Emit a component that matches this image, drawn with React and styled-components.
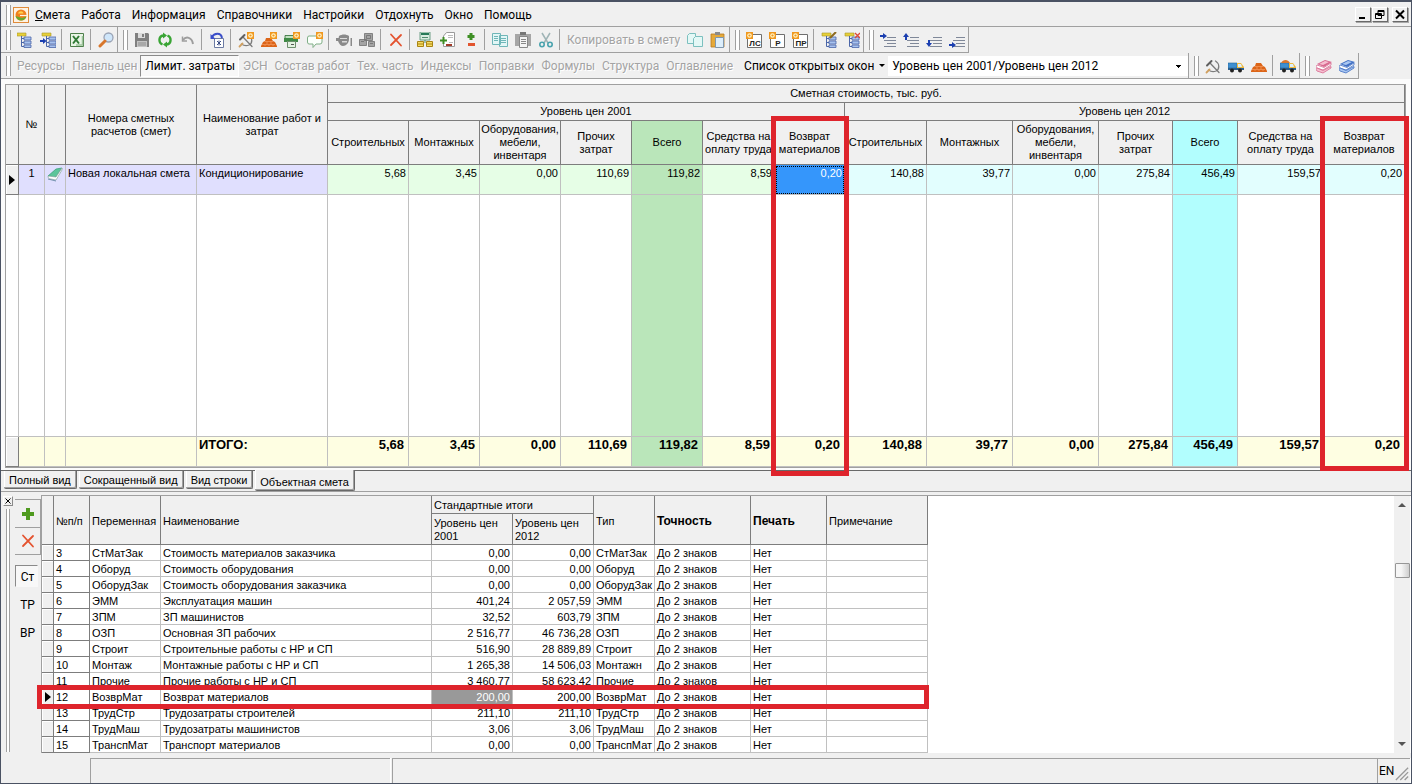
import { Fragment } from "react";
import styled, { createGlobalStyle, css } from "styled-components";

const GlobalStyle = createGlobalStyle`
  :root {
    --face: #f0f0f0;
    --line: #a0a0a0;
    --line-dark: #7d7d7d;
    --line-light: #c0c0c0;
    --mark: #de242c;
    --ui: Roboto, "Open Sans", sans-serif;
    --grid: "Liberation Sans", Arial, sans-serif;
  }

  * {
    box-sizing: border-box;
  }

  body {
    margin: 0;
    background: var(--face);
    color: #000;
    font-family: var(--grid);
    font-size: 11px;
    line-height: 13px;
  }

  button, select {
    margin: 0;
    padding: 0;
    border: 0;
    background: none;
    color: inherit;
    font: inherit;
  }
`;

const Window = styled.div`
  display: flex;
  flex-direction: column;
  min-height: 100vh;
  border: 1px solid #4a5263;
  border-top-width: 2px;
  background: var(--face);
`;

/* ---------- menu and toolbars ---------- */

const MenuBar = styled.header`
  display: flex;
  align-items: center;
  height: 25px;
  padding: 1px 3px 0 5px;
  border-bottom: 1px solid var(--line);
`;

const Grip = styled.span`
  flex: none;
  width: 5px;
  height: 20px;
  margin-right: 2px;
  border: solid var(--line);
  border-width: 0 1px;
  background: #fff;
`;

const Menu = styled.nav`
  display: flex;
  flex: 1;
  padding-left: 1px;
  font-family: var(--ui);
  font-size: 12px;
  line-height: 18px;
`;

const MenuItem = styled.button`
  padding: 0 6px 0 5px;
  white-space: nowrap;
`;

const WindowButtons = styled.div`
  display: flex;
  gap: 1px;
`;

const WindowButton = styled.button`
  width: 16px;
  height: 15px;
  border: 1px solid;
  border-color: #fff #696969 #696969 #fff;
  box-shadow: 1px 1px 0 #a9a9a9;

  &:last-child {
    margin-left: 3px;
  }

  svg {
    display: block;
    width: 14px;
    height: 13px;
  }
`;

const ToolRow = styled.div`
  display: flex;
`;

const Band = styled.div`
  display: flex;
  align-items: center;
  height: 26px;
  padding-left: 5px;
  border: solid var(--line);
  border-width: 0 1px 1px 0;
  font-family: var(--ui);
  font-size: 12px;
  line-height: 18px;
`;

const ToolButton = styled.button`
  display: flex;
  flex: none;
  align-items: center;
  justify-content: center;
  width: 23px;
  height: 22px;

  svg {
    width: 16px;
    height: 16px;
  }
`;

const Separator = styled.span`
  flex: none;
  width: 1px;
  height: 21px;
  margin: 0 3px 0 2px;
  background: var(--line);
`;

const TextButton = styled.button`
  height: 22px;
  padding: 0 3px 0 4px;
  white-space: nowrap;

  &:disabled {
    color: #a3a3a3;
    text-shadow: 1px 1px 0 #fff;
  }

  ${(props) =>
    props.$pressed &&
    css`
      border: 1px solid;
      border-color: #8a8a8a #fff #fff #8a8a8a;
      background: #f8f8f8;
    `}

  ${(props) =>
    props.$drop &&
    css`
      padding-left: 8px;

      &::after {
        content: "";
        display: inline-block;
        margin: 0 0 3px 5px;
        border: 3px solid transparent;
        border-top-color: #000;
        border-bottom: 0;
      }
    `}
`;

const PriceSelect = styled.select`
  width: 300px;
  height: 20px;
  padding-left: 4px;
  appearance: none;
  background-color: #fff;
  background-image: linear-gradient(#000, #000), linear-gradient(#000, #000),
    linear-gradient(#000, #000);
  background-repeat: no-repeat;
  background-position: right 7px top 9px, right 8px top 10px, right 9px top 11px;
  background-size: 5px 1px, 3px 1px, 1px 1px;
`;

/* ---------- upper grid ---------- */

const EstimateArea = styled.main`
  padding: 5px 5px 2px 4px;
  background: #fbfbfb;
`;

const EstimateTable = styled.table`
  width: 100%;
  border: 1px solid var(--line);
  border-spacing: 0;
  table-layout: fixed;
  background: #fff;

  th {
    padding: 0;
    border: solid var(--line-dark);
    border-width: 0 1px 1px 0;
    background: var(--face);
    font-weight: 400;
  }

  td {
    padding: 2px 2px 0;
    border: solid var(--line-light);
    border-width: 0 1px 1px 0;
    vertical-align: top;
    white-space: nowrap;
  }
`;

const HeadRow = styled.tr`
  height: ${(props) => (props.$tall ? 44 : 18)}px;
`;

const HeadCell = styled.th`
  && {
    position: relative;
    background: ${(props) => props.$tone || "var(--face)"};
  }
`;

const EstimateRow = styled.tr`
  height: 30px;
`;

const EmptyRow = styled.tr`
  height: 242px;
`;

const Cell = styled.td`
  && {
    background: ${(props) => props.$tone || "transparent"};
    text-align: ${(props) => props.$align || "left"};
  }

  svg {
    display: block;
    width: 16px;
    height: 16px;
  }
`;

const PickedCell = styled(Cell)`
  && {
    background: #3596fb;
    color: #fff;
    outline: 1px dotted #000;
    outline-offset: -2px;
  }
`;

const MarkerCell = styled.td`
  && {
    padding: 0 0 0 3px;
    border-color: var(--line-dark);
    background: var(--face);
    box-shadow: inset 1px 1px 0 #fff;
    vertical-align: middle;
  }
`;

const RowMarker = styled.span`
  display: block;
  width: 0;
  border: 5px solid transparent;
  border-left: 6px solid #000;
  border-right: 0;
`;

const TotalRow = styled.tr`
  height: 30px;

  && td {
    padding: 1px 4px 0 2px;
    font-size: 13px;
    font-weight: 700;
  }
`;

const ColumnMark = styled.span`
  position: absolute;
  z-index: 2;
  top: -5px;
  left: -4px;
  width: calc(100% + 9px);
  height: ${(props) => props.$height}px;
  border: 5px solid var(--mark);
  pointer-events: none;
`;

/* ---------- view tabs ---------- */

const Tabs = styled.nav`
  display: flex;
  align-items: flex-start;
  gap: 2px;
  height: 22px;
  padding-left: 3px;
  border-top: 1px solid #696969;
  border-bottom: 1px solid var(--line);
`;

const Tab = styled.button`
  height: 18px;
  padding: 1px 5px 0;
  border: 1px solid #696969;
  border-width: 0 1px 1px 0;
  border-radius: 0 0 2px 2px;
  box-shadow: inset -1px -1px 0 var(--line), inset 1px 0 0 #fff;
  white-space: nowrap;

  ${(props) =>
    props.$active &&
    css`
      height: 21px;
      margin-top: -1px;
      padding-top: 4px;
      background: var(--face);
    `}
`;

/* ---------- lower panel ---------- */

const Lower = styled.section`
  display: flex;
  flex: 1;
  margin-top: 3px;
`;

const DockEdge = styled.div`
  display: flex;
  flex-direction: column;
  align-items: center;
  gap: 3px;
  width: 14px;
  padding: 1px 0;
`;

const DockClose = styled.button`
  width: 10px;
  height: 10px;
  border: 1px solid;
  border-color: #fff #8a8a8a #8a8a8a #fff;

  svg {
    display: block;
    width: 8px;
    height: 8px;
  }
`;

const DockGrip = styled.span`
  flex: 1;
  width: 4px;
  border: solid var(--line);
  border-width: 0 1px;
  background: #fff;
`;

const SideTools = styled.div`
  display: flex;
  flex-direction: column;
  width: 26px;
`;

const SideActions = styled.div`
  margin-top: 4px;
  border: solid var(--line);
  border-width: 1px 1px 1px 0;
`;

const SideAction = styled.button`
  display: flex;
  align-items: center;
  justify-content: center;
  width: 100%;
  height: 27px;

  & + & {
    border-top: 1px solid var(--line);
  }

  svg {
    width: 16px;
    height: 16px;
  }
`;

const SideModes = styled.div`
  display: flex;
  flex-direction: column;
  gap: 6px;
  margin: 10px 3px 0 0;
`;

const SideMode = styled.button`
  height: 22px;
  padding: 2px 0 0 2px;
  border: 1px solid ${(props) => (props.$pressed ? "#8a8a8a" : "transparent")};
  border-right-color: transparent;
  border-bottom-color: transparent;
  background: ${(props) => (props.$pressed ? "#f8f8f8" : "none")};
  font-family: var(--ui);
  font-size: 12px;
`;

const VariablesPane = styled.div`
  display: flex;
  flex: 1;
  border: solid var(--line);
  border-width: 1px 0 0 1px;
  background: #fff;
`;

const VariablesTable = styled.table`
  flex: none;
  align-self: flex-start;
  width: 886px;
  border-spacing: 0;
  table-layout: fixed;

  th {
    padding: 2px 2px 0;
    border: solid var(--line-dark);
    border-width: 0 1px 1px 0;
    background: var(--face);
    font-weight: 400;
    text-align: left;
    white-space: nowrap;
  }

  td {
    height: 16px;
    padding: 2px 2px 0;
    border: solid var(--line-light);
    border-width: 0 1px 1px 0;
    white-space: nowrap;
  }
`;

const SplitHead = styled.th`
  && {
    height: ${(props) => props.$height}px;
    padding-top: 1px;
    white-space: normal;
  }
`;

const BoldHead = styled.th`
  && {
    font-size: 12px;
    font-weight: 700;
  }
`;

const VariableRow = styled.tr`
  position: relative;
`;

const Amount = styled.td`
  && {
    text-align: right;
    background: ${(props) => (props.$picked ? "#999" : "none")};
    color: ${(props) => (props.$picked ? "#fff" : "inherit")};
  }
`;

const NumberCell = styled.td`
  && {
    border-color: var(--line-dark);
  }
`;

const RowMark = styled.span`
  position: absolute;
  z-index: 2;
  inset: -4px -1px -4px -5px;
  border: 5px solid var(--mark);
  pointer-events: none;
`;

const ScrollTrack = styled.div`
  display: flex;
  flex-direction: column;
  align-items: center;
  width: 16px;
  margin: 0 1px 0 auto;
  padding: 7px 0;
  background: var(--face);
`;

const ScrollArrow = styled.button`
  width: 0;
  height: 0;
  border: 4px solid transparent;
  border-top: ${(props) => (props.$down ? "4px solid #555" : 0)};
  border-bottom: ${(props) => (props.$down ? 0 : "4px solid #555")};
`;

const ScrollThumb = styled.span`
  width: 15px;
  height: 15px;
  margin: 56px 0 auto;
  border: 1px solid #979797;
  border-radius: 1px;
  background: linear-gradient(90deg, #f6f6f6 40%, #cfcfcf);
`;

/* ---------- status bar ---------- */

const StatusBar = styled.footer`
  display: flex;
  gap: 2px;
  height: 30px;
  padding: 5px 1px 0 89px;
`;

const StatusPane = styled.div`
  flex: ${(props) => props.$flex};
  padding: 6px 1px 0;
  border: solid var(--line);
  border-width: 1px 0 0 1px;
  box-shadow: 1px 0 0 #fff;
  font-size: 12px;
  white-space: nowrap;
`;

const Language = styled(StatusPane)`
  display: flex;
  justify-content: space-between;
  width: 33px;
  margin-left: -2px;
  font-family: var(--ui);

  svg {
    width: 14px;
    height: 16px;
  }
`;

/* ---------- icons ---------- */

const star = (
  <g>
    <rect x="0" y="0" width="7" height="7" fill="#f0981f" />
    <circle cx="3.500" cy="3.500" r="2.300" fill="#fff3c4" />
    <circle cx="3.500" cy="3.500" r="1.100" fill="#f0981f" />
  </g>
);

const badge = <g transform="translate(9 0)">{star}</g>;

const hammer = (
  <g fill="none" strokeLinecap="round">
    <path d="m5 5 9 9.500" stroke="#7a7a7a" strokeWidth="1.300" />
    <path d="m2 7.500 4.500-4.500" stroke="#5f5f5f" strokeWidth="2" />
    <path d="M10.500 3c4 2.500 4.500 8 .5 10-3 1.300-5.500.5-7.500-1" stroke="#7d7d7d" strokeWidth="1.300" />
    <path d="m1.500 14.500 3-3" stroke="#d0a060" strokeWidth="1.800" />
  </g>
);

const bricks = (
  <g>
    <path d="M5 5h5l2 3 2 1 2 4v1H0v-1l2-4 2-1z" fill="#dc6518" />
    <path d="M1 11.500h13M4 8.500h8M6 9v2M10 9v2M8 12v1M4 12v1M12 12v1" stroke="#f3955a" strokeWidth=".8" fill="none" />
  </g>
);

const tree = (
  <g>
    <path d="M0 1h9v3H0z" fill="#e6cf3a" stroke="#a8972a" strokeWidth=".6" />
    <path d="M4.500 4v10.500H7M4.500 6.500H7M4.500 10.500H7" fill="none" stroke="#4b66a8" />
    <path d="M7 5h7v3H7zM7 9h7v3H7zM7 13h7v2.500H7z" fill="#a9c3ee" stroke="#4b66a8" strokeWidth=".8" />
  </g>
);

const sheet = (label) => (
  <g>
    <path d="M1.500 2.500h14v13h-14z" fill="#fff" stroke="#6f6f6f" />
    <text x="9" y="14" textAnchor="middle" fontSize="8" fontWeight="700" fontFamily="Liberation Sans" fill="#222">
      {label}
    </text>
    {star}
  </g>
);

const indent = (shaft, head) => (
  <g fill="none">
    <path d="M7 5.500h9M4 8.500h12M7 11.500h9M4 14.500h12" stroke="#7f8899" />
    <path d={shaft} stroke="#1b3fb0" strokeWidth="2" />
    <path d={head} fill="#1b3fb0" />
  </g>
);

const books = (dark, light) => (
  <g>
    <path d="m1 6 8-4 7 2-8 5z" fill={dark} />
    <path d="m3 6 6-3 4 1-6 3z" fill={light} />
    <path d="M1 7c-1 1-1 2 0 3l6 2 8-5V5L8 9.500z" fill="#fff" stroke={dark} strokeWidth=".8" />
    <path d="M1 10c-1 1-1 2 0 3l6 2 8-5V8.500l-8 4z" fill={light} stroke={dark} strokeWidth=".8" />
  </g>
);

const truck = (
  <g>
    <path d="M0 5h9v5H0z" fill="#3f8fd0" stroke="#22649b" strokeWidth=".6" />
    <path d="M9 5h4l3 4v2H9z" fill="#f0b93e" />
    <path d="M10 6h3l1 3h-4z" fill="#d9efff" />
    <path d="M0 10h16v2H0z" fill="#2c5f8c" />
    <circle cx="4" cy="12.500" r="2" fill="#222" />
    <circle cx="12" cy="12.500" r="2" fill="#222" />
  </g>
);

const cross = (
  <path d="m3 2.500 10 11M13 3 3 13" stroke="#e4532f" strokeWidth="1.800" strokeLinecap="round" fill="none" />
);

const icons = {
  logo: (
    <g>
      <rect x=".5" y=".5" width="15" height="15" fill="#fdf3e4" stroke="#e08b3a" />
      <circle cx="8" cy="8" r="5.500" fill="#f0801e" />
      <path d="M2.500 9c1.500 6 9.500 6 11 .5L9 11z" fill="#6aa92f" />
      <path d="M5 6.500c1-3 5-3 5.500 0z" fill="#ffd34d" />
      <path d="M7 8.500h7" stroke="#fdf3e4" strokeWidth="1.200" />
    </g>
  ),
  tree,
  treeArrow: (
    <g>
      <g transform="translate(2 0)">{tree}</g>
      <path d="M0 9h4" stroke="#1b3fb0" strokeWidth="2" />
      <path d="m3 6 3.500 3L3 12z" fill="#1b3fb0" />
    </g>
  ),
  excel: (
    <g fill="none">
      <path d="M1.500 1.500h13v13h-13z" fill="#e9f5e6" stroke="#4d7f4a" />
      <path d="m4 4 6 7.500M10 4l-6 7.500" stroke="#2f7a34" strokeWidth="2" />
      <path d="M7 13h6.500V4" stroke="#9cc49a" strokeWidth="1.500" />
    </g>
  ),
  search: (
    <g>
      <circle cx="10.500" cy="5.500" r="4.500" fill="#cfe6fa" stroke="#9aa3b5" strokeWidth="1.300" />
      <path d="m7 9-5 5" stroke="#d8762b" strokeWidth="3" strokeLinecap="round" />
    </g>
  ),
  save: (
    <g>
      <path d="M1 1h13l1 1v13H1z" fill="#808080" />
      <path d="M4 1h7v5H4z" fill="#dcdcdc" />
      <path d="M8 2h2v3H8z" fill="#808080" />
      <path d="M3 9h10v6H3z" fill="#c4c4c4" />
      <path d="M4 11h8M4 13h8" stroke="#8d8d8d" />
    </g>
  ),
  refresh: (
    <g fill="none" stroke="#3aa535" strokeWidth="2.400">
      <path d="M5.500 12.500C1 10.500 1.500 3.500 7 3.500" />
      <path d="M10.500 3.500C15 5.500 14.500 12.500 9 12.500" />
      <path d="M6 .5v6L10 3.500zM10 9.500v6L6 12.500z" fill="#3aa535" stroke="none" />
    </g>
  ),
  undo: (
    <g fill="none" stroke="#9d9d9d">
      <path d="M3 8c3-4 9-3 10 4" strokeWidth="2" />
      <path d="M2.500 4.500V9H7" strokeWidth="1.500" />
    </g>
  ),
  undoSheet: (
    <g fill="none">
      <path d="M5.500 6.500h9v9h-9z" fill="#fff" stroke="#6c7ba3" />
      <path d="m8 9 4 4M12 9l-4 4M10 8.500v5" stroke="#3c4e86" />
      <path d="M3 5c2-4 9-5 10 1" stroke="#3b4fc9" strokeWidth="2" />
      <path d="M1.500 2v5h5z" fill="#3b4fc9" />
    </g>
  ),
  hammer,
  hammerNew: (
    <g>
      {hammer}
      {badge}
    </g>
  ),
  bricks,
  bricksNew: (
    <g>
      <g transform="translate(0 1)">{bricks}</g>
      {badge}
    </g>
  ),
  machineNew: (
    <g>
      <path d="M1 3.500h11v3H1z" fill="#bfe0bf" stroke="#2d6a33" strokeWidth=".8" />
      <path d="M0 6h14v4H0z" fill="#3f8a45" />
      <path d="M3.500 9.500h8v6h-8z" fill="#e4f3e2" stroke="#6d8f6c" />
      <path d="M7 12.500h3" stroke="#555" />
      {badge}
    </g>
  ),
  commentNew: (
    <g>
      <path d="M2 4h11q2 0 2 2v4q0 2-2 2H9l-3 3.500V12H2Q.5 12 .5 10V6q0-2 1.500-2z" fill="#fbfffb" stroke="#7fae86" />
      {badge}
    </g>
  ),
  engine: (
    <g fill="#8a8a8a">
      <path d="M3 4c3-2 7-2 10 0v3c0 4-3 7-6 7-2 0-4-2-5-5z" />
      <path d="M0 6h3v3H0zM14.500 6H16v8h-1.500z" />
      <path d="M4 6h7v1H4zM6 9h5v1.500H6z" fill="#dadada" />
    </g>
  ),
  stock: (
    <g fill="#a4a4a4" stroke="#707070" strokeWidth=".8">
      <path d="M5.500 1.500h8v7h-8zM.5 7.500h7v6h-7zM9.500 9.500h6v5h-6z" />
      <path d="M2 9.500h3M7.500 3.500h4v3h-4zM11 11.500h3" />
    </g>
  ),
  cross,
  calc: (
    <g>
      <path d="M3 0h10v8H3z" fill="#d8ece0" stroke="#4f8a6d" strokeWidth=".8" />
      <path d="M4 1h8v2H4z" fill="#277a58" />
      <path d="M5 5.500h6M8 8v3" stroke="#4f8a6d" />
      <path d="M.5 9.500h6v5h-6zM9.500 9.500h6v5h-6z" fill="#f6dc62" stroke="#a98414" />
      <path d="M.5 12h6M9.500 12h6" stroke="#a98414" />
    </g>
  ),
  sheetPlus: (
    <g fill="none">
      <path d="M6.500.5h8v14h-11V4z" fill="#fff" stroke="#9a9a9a" />
      <path d="M8 3.500h5M8 5.500h5M9 10.500h4" stroke="#bbb" />
      <path d="M0 8.500h7M3.500 5v7" stroke="#3f8f25" strokeWidth="2" />
      <path d="M6 13h6" stroke="#a23b2a" strokeWidth="2" />
    </g>
  ),
  plusMinus: (
    <g fill="none" strokeWidth="3">
      <path d="M4.500 4.500h7M8 1v7" stroke="#3f8f25" />
      <path d="M5 12.500h7" stroke="#e2552f" />
    </g>
  ),
  copySheets: (
    <g fill="#e2f6f6" stroke="#6fb6b8">
      <path d="M.5 1.500h8v11h-8zM7.500 3.500h8v11h-8z" />
      <path d="M2 4.500h4M2 6.500h4M2 8.500h4M9 6.500h5M9 8.500h5M9 10.500h5" />
    </g>
  ),
  pasteGray: (
    <g>
      <path d="M0 2h16v12H0z" fill="#a6a6a6" />
      <path d="M5 0h6v3H5z" fill="#777" />
      <path d="M4.500 4.500h8v11h-8z" fill="#f4f4f4" stroke="#888" />
      <path d="M6 7.500h5M6 9.500h5M6 11.500h5" stroke="#888" />
    </g>
  ),
  cut: (
    <g fill="none">
      <path d="m4 1 6 10M12 1 6 11" stroke="#9fb4b6" strokeWidth="1.500" />
      <circle cx="4" cy="12.500" r="2.200" stroke="#4aa3ae" strokeWidth="1.600" />
      <circle cx="12" cy="12.500" r="2.200" stroke="#4aa3ae" strokeWidth="1.600" />
    </g>
  ),
  copyLight: (
    <g fill="#e4f8f6" stroke="#7cc0bf">
      <path d="M.5 3.500l2-2h6v10h-8z" />
      <path d="M6.500 6.500l2-2h7v10h-9z" />
    </g>
  ),
  paste: (
    <g>
      <path d="M1 2h13v13H1z" fill="#e5a93a" stroke="#b57a1e" strokeWidth=".8" />
      <path d="M5 0h5v3H5z" fill="#8b8b8b" />
      <path d="M5.500 5.500h8v10h-8z" fill="#dceefb" stroke="#7f97ad" />
    </g>
  ),
  local: sheet("ЛС"),
  section: sheet("Р"),
  subsection: sheet("ПР"),
  treeEdit: (
    <g>
      <g transform="translate(1 0)">{tree}</g>
      <path d="m9 6 6-6" stroke="#8d6a1f" strokeWidth="2" />
    </g>
  ),
  treeDelete: (
    <g>
      <g transform="translate(1 0)">{tree}</g>
      <path d="m11 1 5 5M16 1l-5 5" stroke="#dd4a3a" strokeWidth="1.300" />
    </g>
  ),
  indentRight: indent("M0 4h4", "M3 1l4 3-4 3z"),
  indentUp: indent("M3 8V4", "M0 5l3-4 3 4z"),
  indentDown: indent("M3 8v4", "M0 11l3 4 3-4z"),
  indentEnd: indent("M0 13h4", "M3 10l4 3-4 3z"),
  truck,
  truckLoaded: (
    <g>
      {truck}
      <path d="M1 5c2-4 7-4 9 0z" fill="#d9772f" />
    </g>
  ),
  booksPink: books("#d8688f", "#f5bfd0"),
  booksBlue: books("#3f6fc4", "#a9c6f0"),
  book: (
    <g>
      <path d="m1 9 8-7 6-1-6 9z" fill="#5cc59a" stroke="#2f9c72" strokeWidth=".7" />
      <path d="M1 9c0 2 1 3 3 3l5 1 6-10V1L9 10z" fill="#fff" stroke="#8aa7a0" strokeWidth=".7" />
      <path d="m1 12 8 2" stroke="#5b7f9c" strokeWidth=".8" />
    </g>
  ),
  plus: <path d="M8 2v12M2 8h12" stroke="#4f9a1f" strokeWidth="4" />,
  minimize: <path d="M3 9h6v2H3z" />,
  restore: (
    <path d="M5 2.500h6v5H5zM5 3.500h6M2.500 5.500h6v5h-6zM2.500 6.500h6" fill="#f0f0f0" stroke="#000" />
  ),
  close: <path d="m3 2.500 8 8M11 2.500l-8 8" stroke="#000" strokeWidth="2" />,
  tinyClose: <path d="m3 3 10 10M13 3 3 13" stroke="#000" strokeWidth="2" />,
  resize: <path d="M1 16 15 2M6 16l9-9M11 16l4-4" stroke="#999" strokeWidth="1.500" />,
};

const boxes = { minimize: "0 0 14 13", restore: "0 0 14 13", close: "0 0 14 13" };

function Icon({ name }) {
  return (
    <svg viewBox={boxes[name] || "0 0 16 16"} width="16" height="16" aria-hidden="true">
      {icons[name]}
    </svg>
  );
}

/* ---------- data ---------- */

const menu = ["Работа", "Информация", "Справочники", "Настройки", "Отдохнуть", "Окно", "Помощь"];

const mainBands = [
  [["tree", "treeArrow"], ["excel"], ["search"]],
  [
    ["save", "refresh", "undo"],
    ["undoSheet"],
    ["hammerNew", "bricksNew", "machineNew", "commentNew"],
    ["engine", "stock"],
    ["cross"],
    ["calc", "sheetPlus", "plusMinus"],
    ["copySheets", "pasteGray", "cut"],
    ["Копировать в смету", "copyLight", "paste"],
  ],
  [["local", "section", "subsection"], ["treeEdit", "treeDelete"]],
  [["indentRight", "indentUp", "indentDown", "indentEnd"]],
];

const resourceBands = [[["hammer", "truck", "bricks"], ["truckLoaded"]], [["booksPink", "booksBlue"]]];

const panels = [
  "Ресурсы",
  "Панель цен",
  "Лимит. затраты",
  "ЭСН",
  "Состав работ",
  "Тех. часть",
  "Индексы",
  "Поправки",
  "Формулы",
  "Структура",
  "Оглавление",
];

const estimateWidths = [13, 26, 21, 131, 131, 81, 71, 81, 71, 71, 72, 70, 82, 86, 86, 74, 65, 86, 81];

const costColumns = [
  "Строительных",
  "Монтажных",
  "Оборудования, мебели, инвентаря",
  "Прочих затрат",
  "Всего",
  "Средства на оплату труда",
  "Возврат материалов",
];

const levels = [
  {
    title: "Уровень цен 2001",
    tone: "#e6fee6",
    totalTone: "#bae6ba",
    markHeight: 360,
    values: ["5,68", "3,45", "0,00", "110,69", "119,82", "8,59", "0,20"],
  },
  {
    title: "Уровень цен 2012",
    tone: "#e2fefe",
    totalTone: "#b2fefe",
    markHeight: 355,
    values: ["140,88", "39,77", "0,00", "275,84", "456,49", "159,57", "0,20"],
  },
];

const variableWidths = [12, 36, 71, 271, 81, 81, 61, 96, 76, 101];

const variables = [
  [3, "СтМатЗак", "Стоимость материалов заказчика", "0,00", "0,00", "СтМатЗак"],
  [4, "Оборуд", "Стоимость оборудования", "0,00", "0,00", "Оборуд"],
  [5, "ОборудЗак", "Стоимость оборудования заказчика", "0,00", "0,00", "ОборудЗак"],
  [6, "ЭММ", "Эксплуатация машин", "401,24", "2 057,59", "ЭММ"],
  [7, "ЗПМ", "ЗП машинистов", "32,52", "603,79", "ЗПМ"],
  [8, "ОЗП", "Основная ЗП рабочих", "2 516,77", "46 736,28", "ОЗП"],
  [9, "Строит", "Строительные работы с НР и СП", "516,90", "28 889,89", "Строит"],
  [10, "Монтаж", "Монтажные работы с НР и СП", "1 265,38", "14 506,03", "Монтажн"],
  [11, "Прочие", "Прочие работы с НР и СП", "3 460,77", "58 623,42", "Прочие"],
  [12, "ВозврМат", "Возврат материалов", "200,00", "200,00", "ВозврМат"],
  [13, "ТрудСтр", "Трудозатраты строителей", "211,10", "211,10", "ТрудСтр"],
  [14, "ТрудМаш", "Трудозатраты машинистов", "3,06", "3,06", "ТрудМаш"],
  [15, "ТранспМат", "Транспорт материалов", "0,00", "0,00", "ТранспМат"],
];

const CURRENT = 12;

/* ---------- components ---------- */

function ToolBand({ groups }) {
  return (
    <Band>
      <Grip />
      {groups.map((group, index) => (
        <Fragment key={index}>
          {index > 0 && <Separator />}
          {group.map((item) =>
            icons[item] ? (
              <ToolButton key={item} aria-label={item}>
                <Icon name={item} />
              </ToolButton>
            ) : (
              <TextButton key={item} disabled>
                {item}
              </TextButton>
            )
          )}
        </Fragment>
      ))}
    </Band>
  );
}

function Columns({ widths }) {
  return (
    <colgroup>
      {widths.map((width, index) => (
        <col key={index} style={{ width }} />
      ))}
    </colgroup>
  );
}

function Estimate() {
  return (
    <EstimateArea>
      <EstimateTable>
        <Columns widths={estimateWidths} />
        <thead>
          <HeadRow>
            <th rowSpan={3} />
            <th rowSpan={3}>№</th>
            <th rowSpan={3} />
            <th rowSpan={3}>
              Номера сметных
              <br />
              расчетов (смет)
            </th>
            <th rowSpan={3}>Наименование работ и затрат</th>
            <th colSpan={14}>Сметная стоимость, тыс. руб.</th>
          </HeadRow>
          <HeadRow>
            {levels.map((level) => (
              <th key={level.title} colSpan={7}>
                {level.title}
              </th>
            ))}
          </HeadRow>
          <HeadRow $tall>
            {levels.map((level) =>
              costColumns.map((column, index) => (
                <HeadCell key={level.title + column} $tone={index === 4 ? level.totalTone : undefined}>
                  {column}
                  {index === 6 && <ColumnMark $height={level.markHeight} />}
                </HeadCell>
              ))
            )}
          </HeadRow>
        </thead>
        <tbody>
          <EstimateRow>
            <MarkerCell>
              <RowMarker />
            </MarkerCell>
            <Cell $tone="#e0dffe" $align="center">
              1
            </Cell>
            <Cell $tone="#e0dffe">
              <Icon name="book" />
            </Cell>
            <Cell $tone="#e0dffe">Новая локальная смета</Cell>
            <Cell $tone="#e0dffe">Кондиционирование</Cell>
            {levels.map((level, levelIndex) =>
              level.values.map((value, index) => {
                const Part = levelIndex === 0 && index === 6 ? PickedCell : Cell;
                return (
                  <Part
                    key={level.title + index}
                    $align="right"
                    $tone={index === 4 ? level.totalTone : level.tone}
                  >
                    {value}
                  </Part>
                );
              })
            )}
          </EstimateRow>
          <EmptyRow>
            {estimateWidths.slice(0, 5).map((width, index) => (
              <Cell key={index} />
            ))}
            {levels.map((level) =>
              level.values.map((value, index) => (
                <Cell key={level.title + index} $tone={index === 4 ? level.totalTone : undefined} />
              ))
            )}
          </EmptyRow>
          <TotalRow>
            <MarkerCell />
            <Cell $tone="#fefee2" />
            <Cell $tone="#fefee2" />
            <Cell $tone="#fefee2" />
            <Cell $tone="#fefee2">ИТОГО:</Cell>
            {levels.map((level) =>
              level.values.map((value, index) => (
                <Cell
                  key={level.title + index}
                  $align="right"
                  $tone={index === 4 ? level.totalTone : "#fefee2"}
                >
                  {value}
                </Cell>
              ))
            )}
          </TotalRow>
        </tbody>
      </EstimateTable>
    </EstimateArea>
  );
}

function Variables() {
  return (
    <VariablesTable>
      <Columns widths={variableWidths} />
      <thead>
        <tr>
          <th rowSpan={2} />
          <th rowSpan={2}>№п/п</th>
          <th rowSpan={2}>Переменная</th>
          <th rowSpan={2}>Наименование</th>
          <SplitHead colSpan={2} $height={18}>
            Стандартные итоги
          </SplitHead>
          <th rowSpan={2}>Тип</th>
          <BoldHead rowSpan={2}>Точность</BoldHead>
          <BoldHead rowSpan={2}>Печать</BoldHead>
          <th rowSpan={2}>Примечание</th>
        </tr>
        <tr>
          <SplitHead $height={31}>Уровень цен 2001</SplitHead>
          <SplitHead $height={31}>Уровень цен 2012</SplitHead>
        </tr>
      </thead>
      <tbody>
        {variables.map(([number, code, title, base, current, type]) => (
          <VariableRow key={number}>
            <MarkerCell>
              {number === CURRENT && (
                <>
                  <RowMarker />
                  <RowMark />
                </>
              )}
            </MarkerCell>
            <NumberCell>{number}</NumberCell>
            <td>{code}</td>
            <td>{title}</td>
            <Amount $picked={number === CURRENT}>{base}</Amount>
            <Amount>{current}</Amount>
            <td>{type}</td>
            <td>До 2 знаков</td>
            <td>Нет</td>
            <td />
          </VariableRow>
        ))}
      </tbody>
    </VariablesTable>
  );
}

function App() {
  return (
    <Window>
      <GlobalStyle />

      <MenuBar>
        <Grip />
        <Icon name="logo" />
        <Menu>
          <MenuItem>
            <u>С</u>мета
          </MenuItem>
          {menu.map((item) => (
            <MenuItem key={item}>{item}</MenuItem>
          ))}
        </Menu>
        <WindowButtons>
          <WindowButton aria-label="Свернуть">
            <Icon name="minimize" />
          </WindowButton>
          <WindowButton aria-label="Восстановить">
            <Icon name="restore" />
          </WindowButton>
          <WindowButton aria-label="Закрыть">
            <Icon name="close" />
          </WindowButton>
        </WindowButtons>
      </MenuBar>

      <ToolRow>
        {mainBands.map((groups, index) => (
          <ToolBand key={index} groups={groups} />
        ))}
      </ToolRow>

      <ToolRow>
        <Band>
          <Grip />
          {panels.map((panel) => {
            const pressed = panel === "Лимит. затраты";
            return (
              <TextButton key={panel} $pressed={pressed} disabled={!pressed}>
                {panel}
              </TextButton>
            );
          })}
          <TextButton $drop>Список открытых окон</TextButton>
          <PriceSelect aria-label="Уровень цен">
            <option>Уровень цен 2001/Уровень цен 2012</option>
          </PriceSelect>
        </Band>
        {resourceBands.map((groups, index) => (
          <ToolBand key={index} groups={groups} />
        ))}
      </ToolRow>

      <Estimate />

      <Tabs>
        <Tab>Полный вид</Tab>
        <Tab>Сокращенный вид</Tab>
        <Tab>Вид строки</Tab>
        <Tab $active>Объектная смета</Tab>
      </Tabs>

      <Lower>
        <DockEdge>
          <DockClose aria-label="Закрыть панель">
            <Icon name="tinyClose" />
          </DockClose>
          <DockGrip />
        </DockEdge>
        <SideTools>
          <SideActions>
            <SideAction aria-label="Добавить">
              <Icon name="plus" />
            </SideAction>
            <SideAction aria-label="Удалить">
              <Icon name="cross" />
            </SideAction>
          </SideActions>
          <SideModes>
            <SideMode $pressed>Ст</SideMode>
            <SideMode>ТР</SideMode>
            <SideMode>ВР</SideMode>
          </SideModes>
        </SideTools>
        <VariablesPane>
          <Variables />
          <ScrollTrack>
            <ScrollArrow aria-label="Вверх" />
            <ScrollThumb />
            <ScrollArrow $down aria-label="Вниз" />
          </ScrollTrack>
        </VariablesPane>
      </Lower>

      <StatusBar>
        <StatusPane $flex="0 0 300px" />
        <StatusPane $flex="1" />
        <Language $flex="none">
          EN
          <Icon name="resize" />
        </Language>
      </StatusBar>
    </Window>
  );
}

export default App;
